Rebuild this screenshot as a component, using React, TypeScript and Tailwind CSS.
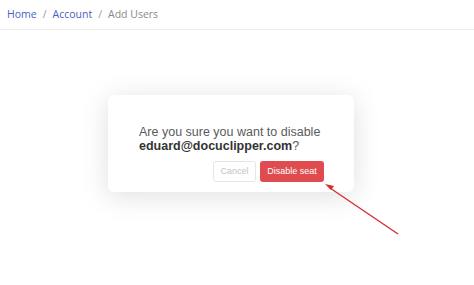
import React from 'react';

export default function App() {
  return (
    <div className="relative w-[474px] h-[285px] overflow-hidden bg-white">
      {/* breadcrumb header */}
      <div className="h-[30px] flex items-center px-[7px] border-b border-[#ececec] text-[10.5px] font-['Open_Sans',sans-serif]">
        <span className="text-[#4a5fc1]">Home</span>
        <span className="mx-[6px] text-[#9a9a9a]">/</span>
        <span className="text-[#4a5fc1]">Account</span>
        <span className="mx-[6px] text-[#9a9a9a]">/</span>
        <span className="text-[#8a8a8a]">Add Users</span>
      </div>

      <div className="pl-[108px] pt-[65px]">
        <div className="w-[246px] h-[97px] rounded-[6px] bg-white shadow-[0_4px_28px_rgba(0,0,0,0.13)] pt-[30px] pl-[31px] pr-[30px] font-['Liberation_Sans',Arial,sans-serif]">
          <p className="text-[12.5px] leading-[14px] text-[#5a5a5a]">
            Are you sure you want to disable
            <br />
            <span className="font-bold text-[#333]">eduard@docuclipper.com</span>?
          </p>
          <div className="flex justify-end gap-[4px] mt-[8px]">
            <button className="h-[21px] w-[43px] rounded-[3px] border border-[#e6e6e6] bg-white text-[9px] text-[#c4c4c4]">
              Cancel
            </button>
            <button className="h-[21px] w-[64px] rounded-[3px] bg-[#e04b4f] text-[9px] text-white">
              Disable seat
            </button>
          </div>
        </div>
      </div>

      {/* annotation arrow */}
      <svg className="absolute left-0 top-0" width="474" height="285" viewBox="0 0 474 285">
        <line x1="398" y1="234" x2="330" y2="188" stroke="#d42a2a" strokeWidth="1.3" />
        <polygon points="325,184 334,186 331,190" fill="#d42a2a" />
      </svg>
    </div>
  );
}
